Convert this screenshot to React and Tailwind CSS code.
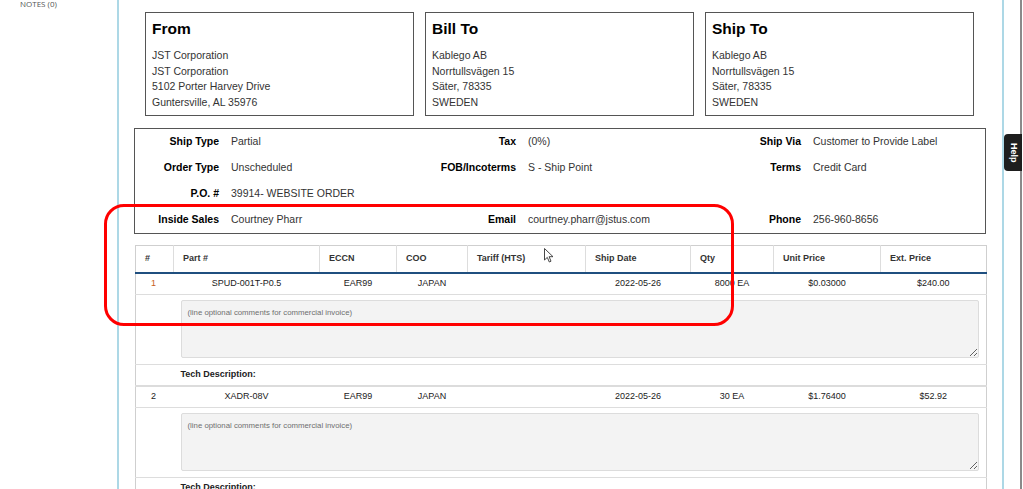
import React from "react";

const parties = [
  {
    title: "From",
    lines: ["JST Corporation", "JST Corporation", "5102 Porter Harvey Drive", "Guntersville, AL 35976"],
  },
  {
    title: "Bill To",
    lines: ["Kablego AB", "Norrtullsvägen 15", "Säter, 78335", "SWEDEN"],
  },
  {
    title: "Ship To",
    lines: ["Kablego AB", "Norrtullsvägen 15", "Säter, 78335", "SWEDEN"],
  },
];

const infoRows = [
  [["Ship Type", "Partial"], ["Tax", "(0%)"], ["Ship Via", "Customer to Provide Label"]],
  [["Order Type", "Unscheduled"], ["FOB/Incoterms", "S - Ship Point"], ["Terms", "Credit Card"]],
  [["P.O. #", "39914- WEBSITE ORDER"], null, null],
  [["Inside Sales", "Courtney Pharr"], ["Email", "courtney.pharr@jstus.com"], ["Phone", "256-960-8656"]],
];

const columns = [
  ["#", 38],
  ["Part #", 146],
  ["ECCN", 77],
  ["COO", 71],
  ["Tariff (HTS)", 118],
  ["Ship Date", 105],
  ["Qty", 83],
  ["Unit Price", 107],
  ["Ext. Price", 106],
];

const lines = [
  { n: "1", part: "SPUD-001T-P0.5", eccn: "EAR99", coo: "JAPAN", date: "2022-05-26", qty: "8000 EA", unit: "$0.03000", ext: "$240.00", hot: true },
  { n: "2", part: "XADR-08V", eccn: "EAR99", coo: "JAPAN", date: "2022-05-26", qty: "30 EA", unit: "$1.76400", ext: "$52.92" },
];

function PartyBox({ title, lines }) {
  return (
    <div className="border border-[#555] h-[104px] px-[6px] pt-[7px]">
      <h3 className="text-[15.5px] leading-[18px] font-bold text-black">{title}</h3>
      <div className="mt-[10px] text-[10.5px] leading-[15.5px] text-[#333]">
        {lines.map((l, i) => (
          <div key={i}>{l}</div>
        ))}
      </div>
    </div>
  );
}

function LineRows({ line }) {
  const cell = "text-center align-middle";
  return (
    <>
      <tr className="h-[22px] border-b border-[#ddd] text-[9px] text-[#222]">
        <td className={`pl-[15px] text-left ${line.hot ? "text-[#c8601c]" : "text-[#222]"}`}>{line.n}</td>
        <td className={cell}>{line.part}</td>
        <td className={cell}>{line.eccn}</td>
        <td className={cell}>{line.coo}</td>
        <td className={cell}></td>
        <td className={cell}>{line.date}</td>
        <td className={cell}>{line.qty}</td>
        <td className={cell}>{line.unit}</td>
        <td className={cell}>{line.ext}</td>
      </tr>
      <tr className="h-[70px] border-b border-[#ddd]">
        <td></td>
        <td colSpan={8} className="pl-[7px] pr-[7px] pt-[5px] pb-[6px] align-top">
          <textarea
            readOnly
            placeholder="(line optional comments for commercial invoice)"
            className="block w-full h-[58px] bg-[#f3f3f3] border border-[#dcdcdc] rounded-[2px] px-[6px] pt-[6px] text-[7.8px] text-[#555] placeholder:text-[#6f6f6f] outline-none"
          />
        </td>
      </tr>
      <tr className="h-[21px] border-b-2 border-[#dcdcdc]">
        <td></td>
        <td colSpan={8} className="pl-[7px] text-[9px] font-bold text-[#222]">
          Tech Description:
        </td>
      </tr>
    </>
  );
}

export default function App() {
  return (
    <div
      className="relative flex h-[489px] w-[1023px] overflow-hidden bg-white"
      style={{ fontFamily: '"Liberation Sans", Arial, sans-serif' }}
    >
      <aside className="w-[117px] shrink-0">
        <div
          className="pl-[20px] text-[8px] leading-[8px] text-[#555] uppercase"
          style={{ fontFamily: '"Open Sans", sans-serif' }}
        >
          Notes (0)
        </div>
      </aside>
      <div className="w-[2px] shrink-0 bg-[#add8e6]" />

      <main className="w-[883px] shrink-0 px-[15px] pt-[12px]">
        <div className="ml-[11px] grid w-[829px] grid-cols-3 gap-[11px]">
          {parties.map((p) => (
            <PartyBox key={p.title} {...p} />
          ))}
        </div>

        <div className="mt-[12px] w-[852px] border border-[#555]">
          {infoRows.map((row, ri) => (
            <div
              key={ri}
              className="grid h-[26px] grid-cols-[84px_187px_86px_176px_85px_1fr] items-center gap-x-3 text-[10.5px]"
            >
              {row.map((pair, ci) =>
                pair ? (
                  <React.Fragment key={ci}>
                    <div className="text-right font-bold text-black">{pair[0]}</div>
                    <div className="text-[#333]">{pair[1]}</div>
                  </React.Fragment>
                ) : (
                  <React.Fragment key={ci}>
                    <div />
                    <div />
                  </React.Fragment>
                )
              )}
            </div>
          ))}
        </div>

        <table className="mt-[11px] ml-[1px] w-[851px] table-fixed border-collapse border border-[#cfcfcf]">
          <colgroup>
            {columns.map(([h, w]) => (
              <col key={h} style={{ width: w }} />
            ))}
          </colgroup>
          <thead>
            <tr className="h-[27px] border-b-2 border-[#1f4f7f]">
              {columns.map(([h], i) => (
                <th
                  key={h}
                  className={`text-left align-middle pl-[9px] text-[9px] font-bold text-[#333] ${
                    i > 0 ? "border-l border-[#ddd]" : ""
                  }`}
                >
                  {h}
                </th>
              ))}
            </tr>
          </thead>
          <tbody>
            {lines.map((l) => (
              <LineRows key={l.n} line={l} />
            ))}
          </tbody>
        </table>
      </main>

      <div className="w-[2px] shrink-0 bg-[#add8e6]" />
      <div className="relative w-[19px] shrink-0">
        <div className="absolute right-[1px] top-0 h-full w-[2px] bg-[#8a8a8a]" />
      </div>

      {/* help tab */}
      <div className="absolute left-[1004px] top-[134px] flex h-[37px] w-[18px] items-center justify-center rounded-l-[4px] bg-[#1e1e1e]">
        <span className="rotate-90 text-[9px] font-bold text-white">Help</span>
      </div>

      {/* red annotation */}
      <div className="pointer-events-none absolute left-[104px] top-[204px] h-[122px] w-[630px] rounded-[20px] border-[3px] border-[#ff0000]" />

      {/* mouse cursor */}
      <svg className="absolute left-[544px] top-[248px]" width="10" height="15" viewBox="0 0 10 15">
        <path d="M0.5 0.5 L0.5 12 L3.3 9.4 L5.3 14 L7 13.2 L5.1 8.7 L9 8.7 Z" fill="#fff" stroke="#333" strokeWidth="0.9" strokeLinejoin="round" />
      </svg>
    </div>
  );
}
